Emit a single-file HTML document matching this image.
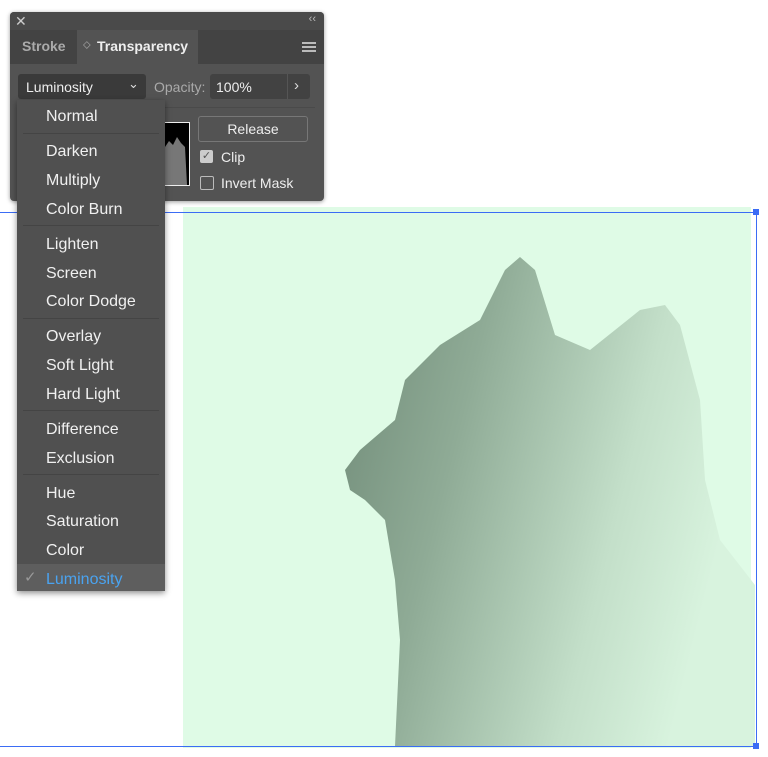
<!DOCTYPE html>
<html><head><meta charset="utf-8"><style>
body{margin:0;width:768px;height:757px;background:#fff;position:relative;overflow:hidden;font-family:"Liberation Sans",sans-serif}
.abs{position:absolute}
.panel{left:10px;top:12px;width:314px;height:189px;background:#535353;border-radius:4px;box-shadow:0 1px 4px rgba(0,0,0,.4)}
.menu{left:17px;top:100px;width:148px;height:491px;background:#505050;box-shadow:0 2px 6px rgba(0,0,0,.45);}
.it{position:absolute;left:29px;color:#f0f0f0;font-size:16px;line-height:20px;margin-top:2px}
.sep{position:absolute;left:6px;right:6px;height:1px;background:#444}
</style></head><body>
<svg class="abs" style="left:0;top:0" width="768" height="757">
<defs><linearGradient id="g" x1="0" y1="0" x2="1" y2="0.3">
<stop offset="0" stop-color="#6f8a77"/><stop offset="0.35" stop-color="#8fab96"/><stop offset="0.75" stop-color="#c3dfc9"/><stop offset="1" stop-color="#d8f3de"/></linearGradient></defs>
<rect x="183" y="207" width="568" height="541" fill="#dffbe6"/>
<path d="M345 470 L360 450 L395 420 L405 380 L440 345 L480 320 L505 270 L520 257 L535 270 L555 335 L590 350 L640 310 L665 305 L680 325 L700 400 L705 480 L720 540 L755 585 L755 746 L395 746 L400 640 L395 580 L385 520 L365 500 L350 490 Z" fill="url(#g)"/>
<line x1="0" y1="212.5" x2="757" y2="212.5" stroke="#3b6cf5" stroke-width="1"/>
<line x1="0" y1="746.5" x2="757" y2="746.5" stroke="#3b6cf5" stroke-width="1"/>
<line x1="756.5" y1="212" x2="756.5" y2="747" stroke="#3b6cf5" stroke-width="1"/>
<rect x="753" y="209" width="6" height="6" fill="#3b6cf5"/><rect x="753" y="743" width="6" height="6" fill="#3b6cf5"/>
</svg>
<div class="abs panel">
 <div class="abs" style="left:0;top:0;width:314px;height:18px;background:#4a4a4a;border-radius:4px 4px 0 0"></div>
 <div class="abs" style="left:5px;top:1px;color:#ccc;font-size:14px">✕</div>
 <div class="abs" style="right:8px;top:1px;color:#bbb;font-size:11px">‹‹</div>
 <div class="abs" style="left:0;top:18px;width:314px;height:34px;background:#434343"></div>
 <div class="abs" style="left:67px;top:18px;width:121px;height:34px;background:#535353"></div>
 <div class="abs" style="left:12px;top:26px;color:#aaa;font-size:14px;font-weight:bold">Stroke</div>
 <div class="abs" style="left:73px;top:27px;color:#aaa;font-size:11px">⬦</div>
 <div class="abs" style="left:87px;top:26px;color:#eee;font-size:14px;font-weight:bold">Transparency</div>
 <div class="abs" style="left:292px;top:30px;width:14px;height:2px;background:#bbb;box-shadow:0 4px 0 #bbb,0 8px 0 #bbb"></div>
 <div class="abs" style="left:8px;top:62px;width:128px;height:25px;background:#3a3a3a;border-radius:3px"></div>
 <div class="abs" style="left:16px;top:67px;color:#eee;font-size:14px">Luminosity</div>
 <div class="abs" style="left:118px;top:64px;color:#ddd;font-size:13px">⌄</div>
 <div class="abs" style="left:144px;top:67px;color:#aaa;font-size:14px">Opacity:</div>
 <div class="abs" style="left:200px;top:62px;width:100px;height:25px;background:#424242;border-radius:3px"></div>
 <div class="abs" style="left:277px;top:62px;width:1px;height:25px;background:#555"></div>
 <div class="abs" style="left:206px;top:67px;color:#eee;font-size:14px">100%</div>
 <div class="abs" style="left:284px;top:65px;color:#ddd;font-size:15px">›</div>
 <div class="abs" style="left:8px;top:95px;width:297px;height:1px;background:#4a4a4a"></div>
 <div class="abs" style="left:150px;top:110px;width:28px;height:62px;background:#000;border:1px solid #eee"></div>
 <svg class="abs" style="left:155px;top:125px" width="24" height="48"><path d="M0 48 L0 10 L4 4 L8 8 L12 0 L16 6 L20 10 L22 48 Z" fill="#777"/></svg>
 <div class="abs" style="left:188px;top:104px;width:108px;height:24px;border:1px solid #777;border-radius:3px;color:#eee;font-size:14px;text-align:center;line-height:24px">Release</div>
 <div class="abs" style="left:190px;top:138px;width:13px;height:13px;background:#ccc;border-radius:2px;color:#555;font-size:11px;line-height:13px;text-align:center">✓</div>
 <div class="abs" style="left:211px;top:137px;color:#eee;font-size:14px">Clip</div>
 <div class="abs" style="left:190px;top:164px;width:12px;height:12px;border:1px solid #bbb;border-radius:2px"></div>
 <div class="abs" style="left:211px;top:163px;color:#eee;font-size:14px">Invert Mask</div>
</div>
<div class="abs menu">
 <div class="it" style="top:5px">Normal</div><div class="sep" style="top:33px"></div>
 <div class="it" style="top:40px">Darken</div>
 <div class="it" style="top:69px">Multiply</div>
 <div class="it" style="top:98px">Color Burn</div><div class="sep" style="top:125px"></div>
 <div class="it" style="top:133px">Lighten</div>
 <div class="it" style="top:162px">Screen</div>
 <div class="it" style="top:190px">Color Dodge</div><div class="sep" style="top:218px"></div>
 <div class="it" style="top:225px">Overlay</div>
 <div class="it" style="top:254px">Soft Light</div>
 <div class="it" style="top:283px">Hard Light</div><div class="sep" style="top:310px"></div>
 <div class="it" style="top:318px">Difference</div>
 <div class="it" style="top:347px">Exclusion</div><div class="sep" style="top:374px"></div>
 <div class="it" style="top:382px">Hue</div>
 <div class="it" style="top:410px">Saturation</div>
 <div class="it" style="top:439px">Color</div>
 <div class="abs" style="left:0;top:464px;width:148px;height:27px;background:#5e5e5e"></div>
 <div class="abs" style="left:7px;top:468px;color:#999;font-size:15px">✓</div>
 <div class="it" style="top:468px;color:#4aa3f0">Luminosity</div>
</div>
</body></html>
